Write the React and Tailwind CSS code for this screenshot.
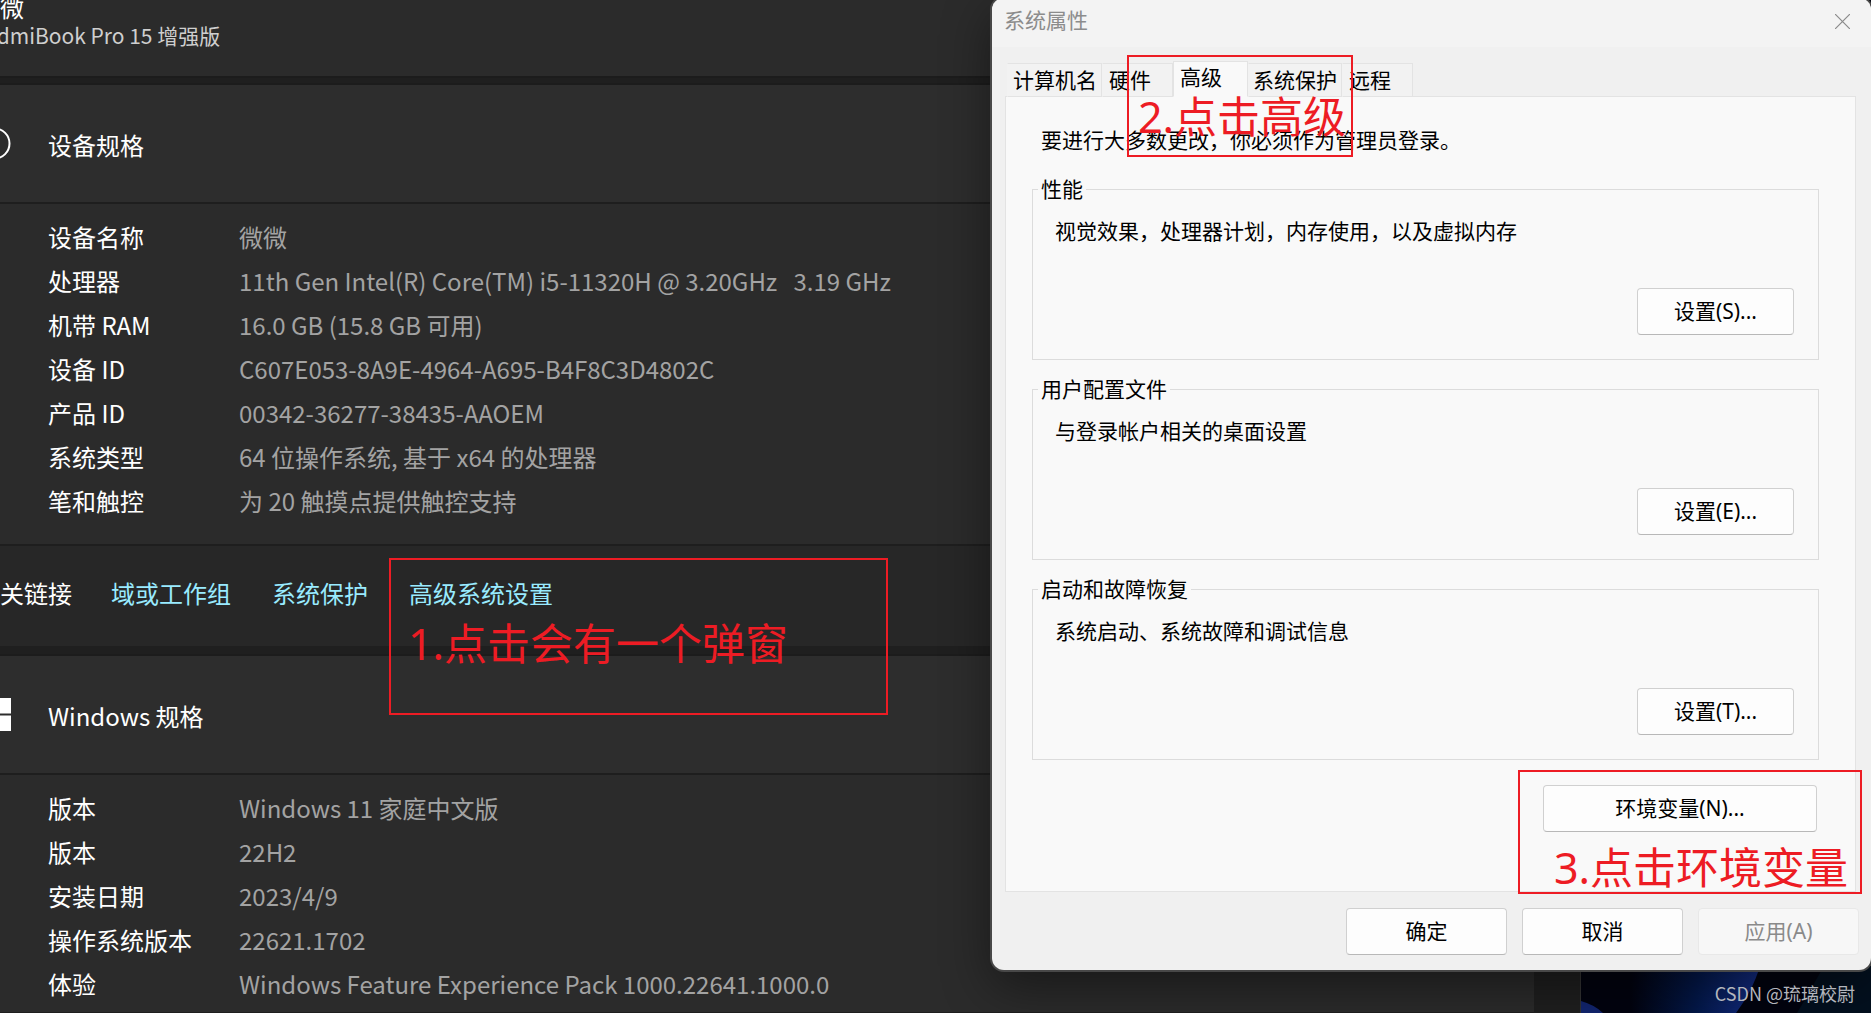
import React, { useState } from 'react';

const deviceSpecs = [
    ['设备名称', '微微'],
    ['处理器', '11th Gen Intel(R) Core(TM) i5-11320H @ 3.20GHz   3.19 GHz'],
    ['机带 RAM', '16.0 GB (15.8 GB 可用)'],
    ['设备 ID', 'C607E053-8A9E-4964-A695-B4F8C3D4802C'],
    ['产品 ID', '00342-36277-38435-AAOEM'],
    ['系统类型', '64 位操作系统, 基于 x64 的处理器'],
    ['笔和触控', '为 20 触摸点提供触控支持'],
];

const windowsSpecs = [
    ['版本', 'Windows 11 家庭中文版'],
    ['版本', '22H2'],
    ['安装日期', '2023/4/9'],
    ['操作系统版本', '22621.1702'],
    ['体验', 'Windows Feature Experience Pack 1000.22641.1000.0'],
];

const tabs = [
    { name: '计算机名', width: 'w-[95px]', pad: 'pl-[5px]' },
    { name: '硬件', width: 'w-[71px]', pad: 'pl-[6px]' },
    { name: '高级', width: 'w-[75px]', pad: 'pl-[6px]' },
    { name: '系统保护', width: 'w-[94px]', pad: 'pl-[4px]' },
    { name: '远程', width: 'w-[71px]', pad: 'pl-[6px]' },
];

const groups = [
    { title: '性能', text: '视觉效果，处理器计划，内存使用，以及虚拟内存', button: '设置(S)...' },
    { title: '用户配置文件', text: '与登录帐户相关的桌面设置', button: '设置(E)...' },
    { title: '启动和故障恢复', text: '系统启动、系统故障和调试信息', button: '设置(T)...' },
];

function SpecTable({ rows }) {
    return (
        <table className="w-full border-collapse text-left">
            <tbody>
                {rows.map(([label, value], i) => (
                    <tr key={i} className="h-11">
                        <th className="w-[239px] p-0 pl-12 font-normal text-white">{label}</th>
                        <td className="whitespace-pre p-0 text-[#a3a3a3]">{value}</td>
                    </tr>
                ))}
            </tbody>
        </table>
    );
}

function SectionHeader({ icon, title }) {
    return (
        <div className="flex h-[119px] items-center border-b-2 border-[#1e1e1e] bg-[#2d2d2d]">
            <div className="-ml-[22px] mr-[37px] w-[33px]">{icon}</div>
            <h2 className="pt-[2px] text-white">{title}</h2>
        </div>
    );
}

function InfoIcon() {
    return (
        <svg className="block size-[33px]" viewBox="0 0 33 33" fill="none" stroke="white" strokeWidth="2">
            <circle cx="16.5" cy="16.5" r="15" />
            <path d="M16.5 14v10M16.5 9v2" />
        </svg>
    );
}

function WindowsIcon() {
    return (
        <svg className="block size-[33px]" viewBox="0 0 33 33" fill="white">
            <path d="M0 0h15.5v15.5H0zM17.5 0H33v15.5H17.5zM0 17.5h15.5V33H0zM17.5 17.5H33V33H17.5z" />
        </svg>
    );
}

function AboutPage() {
    return (
        <main className="mr-[46px] font-['Noto_Sans_CJK_SC',sans-serif] text-[24px] leading-8">
            <header className="-mt-[9px] flex h-[87px] flex-col overflow-hidden border-b-2 border-[#1c1c1c] bg-[#2b2b2b]">
                <h1 className="-ml-6 text-white">微微</h1>
                <p className="-ml-7 text-[21px] leading-6 text-[#cfcfcf]">RedmiBook Pro 15 增强版</p>
            </header>

            <section className="mt-[5px] border-t-2 border-[#1c1c1c]">
                <SectionHeader icon={<InfoIcon />} title="设备规格" />
                <div className="bg-[#2b2b2b] pb-[21px] pt-[11px]">
                    <SpecTable rows={deviceSpecs} />
                </div>
                <nav className="flex h-[102px] items-center gap-[41px] border-t-2 border-[#1e1e1e] bg-[#272727] pb-[6px] text-[#99ebff]">
                    <span className="-ml-6 -mr-[2px] text-white">相关链接</span>
                    <a href="#domain">域或工作组</a>
                    <a href="#protect">系统保护</a>
                    <div className="relative">
                        <a href="#advanced">高级系统设置</a>
                        <div className="absolute -left-5 -top-[19px] h-[157px] w-[499px] border-2 border-[#ed1c24] pl-[17px] pt-[58px] font-['Noto_Sans','Noto_Sans_CJK_SC',sans-serif] text-[43px] leading-[52px] text-[#ed1c24]">
                            1.点击会有一个弹窗
                        </div>
                    </div>
                </nav>
            </section>

            <section className="mt-2 border-t-2 border-[#1c1c1c]">
                <SectionHeader icon={<WindowsIcon />} title="Windows 规格" />
                <div className="border-b border-[#1e1e1e] bg-[#2b2b2b] pb-[6px] pt-[11px]">
                    <SpecTable rows={windowsSpecs} />
                </div>
            </section>
        </main>
    );
}

function PushButton({ children, className, ...rest }) {
    return (
        <button
            type="button"
            className={`h-[47px] rounded border border-[#d0d0d0] border-b-[#b8b8b8] bg-[#fdfdfd] pb-[2px] disabled:border-[#e8e8e8] disabled:bg-[#f7f7f7] disabled:text-[#8a8a8a] ${className}`}
            {...rest}
        >
            {children}
        </button>
    );
}

function SystemProperties() {
    const [active, setActive] = useState('高级');

    return (
        <div
            role="dialog"
            aria-label="系统属性"
            className="absolute -top-[2px] left-[992px] right-0 rounded-xl bg-[#f0f0f0] text-[21px] leading-7 text-black shadow-[0_0_0_2px_#484848,0_16px_50px_rgba(0,0,0,0.45)]"
        >
            <div className="flex h-[49px] items-center justify-between rounded-t-xl bg-[#f3f3f3] pb-[2px] pl-3 pr-[21px] text-[#8c8c8c]">
                <span className="pb-1">系统属性</span>
                <button type="button" aria-label="关闭">
                    <svg className="block size-[15px]" viewBox="0 0 15 15" fill="none" stroke="#8a8a8a" strokeWidth="1.2">
                        <path d="M0 0l15 15M15 0L0 15" />
                    </svg>
                </button>
            </div>

            <div className="px-[13px] pt-[14px]">
                <div role="tablist" className="-mb-px ml-[2px] flex items-end">
                    {tabs.map((tab) => (
                        <button
                            key={tab.name}
                            type="button"
                            role="tab"
                            aria-selected={active === tab.name}
                            onClick={() => setActive(tab.name)}
                            className={`border text-left whitespace-nowrap ${tab.width} ${tab.pad} ${
                                active === tab.name
                                    ? 'h-9 border-[#e3e3e3] border-b-[#f9f9f9] bg-[#f9f9f9] pb-1'
                                    : 'h-[34px] border-[#e3e3e3] border-l-transparent bg-[#f2f2f2] pb-px'
                            }`}
                        >
                            {tab.name}
                        </button>
                    ))}
                </div>

                <div className="mr-[2px] border border-[#e3e3e3] bg-[#f9f9f9] pb-[59px] pl-[26px] pr-9">
                    <p className="pl-[9px] pt-[29px]">要进行大多数更改，你必须作为管理员登录。</p>
                    <div className="mt-[21px] flex flex-col gap-[15px]">
                        {groups.map((group) => (
                            <fieldset key={group.title} className="h-[185px] border border-[#dcdcdc] pl-[22px] pr-6">
                                <legend className="-ml-[17px] px-[3px]">{group.title}</legend>
                                <p className="pt-[14px]">{group.text}</p>
                                <div className="mt-[43px] flex justify-end">
                                    <PushButton className="w-[157px]">{group.button}</PushButton>
                                </div>
                            </fieldset>
                        ))}
                    </div>
                    <div className="mt-[25px] flex justify-end pr-[2px]">
                        <PushButton className="w-[274px]">环境变量(N)...</PushButton>
                    </div>
                </div>
            </div>

            <div className="flex justify-end gap-[15px] pb-[15px] pr-3 pt-4">
                <PushButton className="w-[161px]">确定</PushButton>
                <PushButton className="w-[161px]">取消</PushButton>
                <PushButton className="w-[161px]" disabled>应用(A)</PushButton>
            </div>

            <div className="pointer-events-none absolute left-[135px] top-[57px] h-[102px] w-[226px] whitespace-nowrap border-2 border-[#ed1c24] pl-[9px] pt-[34px] text-[43px] leading-[52px] text-[#ed1c24]">
                2.点击高级
            </div>
            <div className="pointer-events-none absolute bottom-[76px] right-[9px] h-[124px] w-[344px] whitespace-nowrap border-2 border-[#ed1c24] pl-[34px] pt-[70px] text-[43px] leading-[52px] text-[#ed1c24]">
                3.点击环境变量
            </div>
        </div>
    );
}

function Wallpaper() {
    return (
        <svg className="absolute bottom-0 right-0 h-[60px] w-[290px]" viewBox="0 0 290 60" preserveAspectRatio="none">
            <defs>
                <linearGradient id="swirl" x1="0" y1="0" x2="1" y2="0">
                    <stop offset="0" stopColor="#02030f" />
                    <stop offset="0.5" stopColor="#03184a" />
                    <stop offset="1" stopColor="#142d86" />
                </linearGradient>
            </defs>
            <rect width="290" height="60" fill="#02030f" />
            <path d="M50 0H182C178 24 166 45 155 60H50z" fill="url(#swirl)" />
            <path d="M0 48Q14 52 22 60H0z" fill="#12256f" />
            <path d="M250 0H290V60H216Q228 40 250 0z" fill="#03101f" />
        </svg>
    );
}

function App() {
    return (
        <div className="relative min-h-screen overflow-hidden bg-[#02030f] font-['Noto_Sans','Noto_Sans_CJK_SC',sans-serif]">
            <Wallpaper />
            <div className="relative mr-[290px] overflow-hidden border-r border-[#333] bg-[#1f1f1f]">
                <AboutPage />
            </div>
            <SystemProperties />
            <p className="absolute bottom-2 right-4 font-['Noto_Sans_CJK_SC',sans-serif] text-[18px] leading-6 text-[#b4b6bd]">CSDN @琉璃校尉</p>
        </div>
    );
}

export default App;
